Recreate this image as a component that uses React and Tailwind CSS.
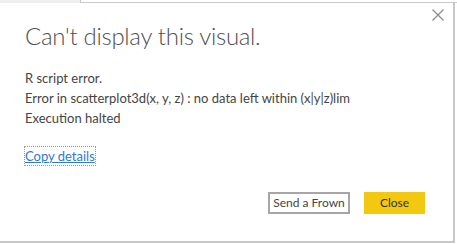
import React from "react";

function App() {
  return (
    <div className="w-[457px] h-[244px] bg-white relative overflow-hidden" style={{ fontFamily: "Lato, 'Open Sans', sans-serif" }}>
      <div className="flex h-[3px]">
        <div className="w-[81px] bg-[#eeeeee] border-r border-[#c8c8c8]"></div>
        <div className="flex-1 border-b border-[#c8c8c8]"></div>
      </div>
      <div className="w-[455px] h-[240px] border-r-2 border-b-2 border-[#c8c8c8] flex flex-col pl-[25px] pr-[30px]">
        <div className="flex justify-end pt-[6px] -mr-[21px]">
          <svg width="12" height="12" viewBox="0 0 12 12" className="text-[#8a8a8a]">
            <path d="M0.5 0.5 L11.5 11.5 M11.5 0.5 L0.5 11.5" stroke="currentColor" strokeWidth="1.2" />
          </svg>
        </div>
        <h1 className="text-[24px] font-light text-[#505050] leading-[36px] -mt-[3px] tracking-[-0.3px]">Can't display this visual.</h1>
        <div className="mt-[14px] text-[13px] leading-[20px] text-[#444]">
          <p>R script error.</p>
          <p>Error in scatterplot3d(x, y, z) : no data left within (x|y|z)lim</p>
          <p>Execution halted</p>
        </div>
        <div className="mt-[15px]">
          <a className="text-[13px] text-[#2e7ad1] underline outline-1 outline-dotted outline-[#999] leading-[18px] inline-block">Copy details</a>
        </div>
        <div className="flex justify-end gap-[14px] mt-auto mb-[27px] -mr-[2px]">
          <button className="w-[82px] h-[22px] border-2 border-[#a6a6a6] text-[12px] text-[#444]">Send a Frown</button>
          <button className="w-[61px] h-[22px] bg-[#f2c811] text-[12px] text-[#333]">Close</button>
        </div>
      </div>
    </div>
  );
}

export default App;
